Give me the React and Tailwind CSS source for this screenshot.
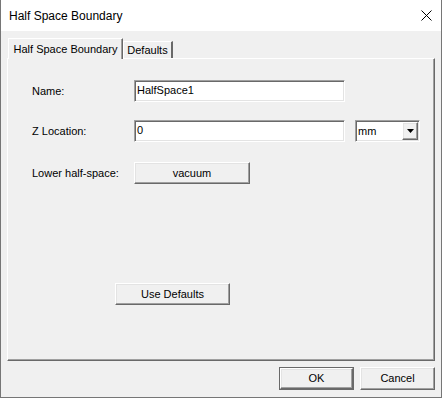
import React from "react";

const sunken =
  "border border-t-[#a0a0a0] border-l-[#a0a0a0] border-r-white border-b-white shadow-[inset_1px_1px_0_#696969,inset_-1px_-1px_0_#e3e3e3]";
const raised =
  "border border-t-white border-l-white border-r-[#696969] border-b-[#696969] shadow-[inset_-1px_-1px_0_#a0a0a0,inset_1px_1px_0_#e3e3e3] bg-[#f0f0f0]";

function Btn({ children, className = "" }) {
  return (
    <div className={`${raised} flex items-center justify-center text-black ${className}`}>
      {children}
    </div>
  );
}

export default function App() {
  return (
    <div className="w-[442px] h-[398px] flex flex-col border-x border-b border-[#767676] bg-[#f0f0f0] font-['Liberation_Sans',Arial,sans-serif] text-[11px] text-black overflow-hidden">
      {/* Title bar */}
      <div className="h-[31px] bg-white flex items-center justify-between pl-[8px] pr-[9px] shrink-0">
        <span className="text-[12px] leading-none">Half Space Boundary</span>
        <svg width="11" height="11" viewBox="0 0 11 11" className="block">
          <path d="M0.5 0.5 L10.5 10.5 M10.5 0.5 L0.5 10.5" stroke="#000" strokeWidth="1" fill="none" />
        </svg>
      </div>

      {/* Body */}
      <div className="flex flex-col pt-[7px] pl-[6px] pr-[6px]">
        {/* Tabs */}
        <div className="flex items-end h-[20px] pl-[1px]">
          <div className="relative z-10 -mb-px h-[21px] w-[115px] bg-[#f0f0f0] border-t border-l border-white border-r border-r-[#696969] shadow-[inset_-1px_0_0_#a0a0a0] flex items-center justify-center">
            Half Space Boundary
          </div>
          <div className="h-[17px] w-[50px] border-t border-l border-white border-r-2 border-r-[#696969] flex items-center justify-center pt-[1px]">
            Defaults
          </div>
        </div>

        {/* Panel */}
        <div className="h-[303px] w-[428px] border-t border-l border-white border-r border-b border-r-[#696969] border-b-[#696969] shadow-[inset_-1px_-1px_0_#a0a0a0] flex flex-col pl-[24px] pt-[21px]">
          <div className="flex items-center h-[22px]">
            <div className="w-[102px]">Name:</div>
            <div className={`${sunken} w-[211px] h-[22px] bg-white flex items-center pl-[2px] pb-[1px]`}>
              HalfSpace1
            </div>
          </div>

          <div className="flex items-center h-[22px] mt-[18px]">
            <div className="w-[102px]">Z Location:</div>
            <div className={`${sunken} w-[211px] h-[22px] bg-white flex items-center pl-[2px] pb-[1px]`}>
              0
            </div>
            <div className={`${sunken} ml-[10px] w-[65px] h-[22px] bg-white flex items-center justify-between pl-[2px] pr-[1px]`}>
              <span>mm</span>
              <div className={`${raised} w-[16px] h-[18px] flex items-center justify-center`}>
                <svg width="7" height="4" viewBox="0 0 7 4" className="block">
                  <path d="M0 0 H7 L3.5 4 Z" fill="#000" />
                </svg>
              </div>
            </div>
          </div>

          <div className="flex items-center h-[22px] mt-[20px]">
            <div className="w-[102px]">Lower half-space:</div>
            <Btn className="w-[116px] h-[22px]">vacuum</Btn>
          </div>

          <div className="mt-[99px] ml-[83px]">
            <Btn className="w-[115px] h-[22px]">Use Defaults</Btn>
          </div>
        </div>

        {/* Footer buttons */}
        <div className="flex justify-end gap-[6px] mt-[6px]">
          <div className="border border-[#696969]">
            <Btn className="w-[73px] h-[21px]">OK</Btn>
          </div>
          <Btn className="w-[75px] h-[23px]">Cancel</Btn>
        </div>
      </div>
    </div>
  );
}
